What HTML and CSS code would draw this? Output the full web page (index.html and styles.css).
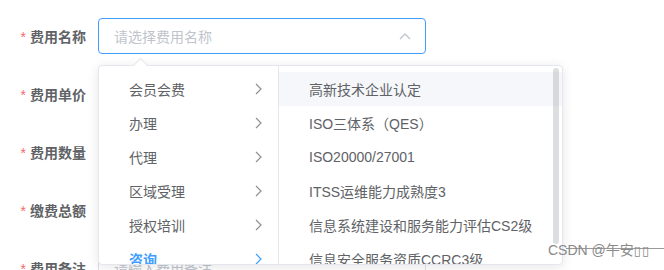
FILE: index.html
```html
<!DOCTYPE html>
<html lang="zh-CN">
<head>
    <meta charset="UTF-8">
    <title>费用表单</title>
    <link rel="stylesheet" href="styles.css">
</head>
<body>
    <div class="form">
        <div class="form-item">
            <label class="label"><span class="req">*</span>费用名称</label>
            <div class="input is-focus">
                <span class="placeholder">请选择费用名称</span>
                <svg class="arrow" width="12" height="8" viewBox="0 0 12 8"><path d="M1 7 L6 2 L11 7" fill="none" stroke="#c0c4cc" stroke-width="1.3"/></svg>
            </div>
        </div>
        <div class="form-item">
            <label class="label"><span class="req">*</span>费用单价</label>
            <div class="input"><span class="placeholder">请输入费用单价</span></div>
        </div>
        <div class="form-item">
            <label class="label"><span class="req">*</span>费用数量</label>
            <div class="input"><span class="placeholder">请输入费用数量</span></div>
        </div>
        <div class="form-item">
            <label class="label"><span class="req">*</span>缴费总额</label>
            <div class="input"><span class="placeholder">请输入缴费总额</span></div>
        </div>
        <div class="form-item">
            <label class="label"><span class="req">*</span>费用备注</label>
            <div class="input"><span class="placeholder">请输入费用备注</span></div>
        </div>
    </div>

    <!-- 级联下拉面板 -->
    <div class="cascader-panel">
        <div class="popper-arrow"></div>
        <div class="menu menu-first">
            <div class="node">会员会费<svg class="chev" width="7" height="12" viewBox="0 0 7 12"><path d="M1 1 L6 6 L1 11" fill="none" stroke="currentColor" stroke-width="1.2"/></svg></div>
            <div class="node">办理<svg class="chev" width="7" height="12" viewBox="0 0 7 12"><path d="M1 1 L6 6 L1 11" fill="none" stroke="currentColor" stroke-width="1.2"/></svg></div>
            <div class="node">代理<svg class="chev" width="7" height="12" viewBox="0 0 7 12"><path d="M1 1 L6 6 L1 11" fill="none" stroke="currentColor" stroke-width="1.2"/></svg></div>
            <div class="node">区域受理<svg class="chev" width="7" height="12" viewBox="0 0 7 12"><path d="M1 1 L6 6 L1 11" fill="none" stroke="currentColor" stroke-width="1.2"/></svg></div>
            <div class="node">授权培训<svg class="chev" width="7" height="12" viewBox="0 0 7 12"><path d="M1 1 L6 6 L1 11" fill="none" stroke="currentColor" stroke-width="1.2"/></svg></div>
            <div class="node active">咨询<svg class="chev" width="7" height="12" viewBox="0 0 7 12"><path d="M1 1 L6 6 L1 11" fill="none" stroke="currentColor" stroke-width="1.2"/></svg></div>
        </div>
        <div class="menu menu-second">
            <div class="node hover">高新技术企业认定</div>
            <div class="node">ISO三体系（QES）</div>
            <div class="node">ISO20000/27001</div>
            <div class="node">ITSS运维能力成熟度3</div>
            <div class="node">信息系统建设和服务能力评估CS2级</div>
            <div class="node">信息安全服务资质CCRC3级</div>
            <div class="scrollbar"></div>
        </div>
    </div>

    <div class="watermark">CSDN @午安<span class="tofu">▯▯</span></div>
</body>
</html>
```

FILE: styles.css
```css
html {
    overflow: hidden;
}
body {
    margin: 0;
    width: 664px;
    height: 270px;
    overflow: hidden;
    background: #fff;
    font-family: 'Liberation Sans', 'Noto Sans CJK SC', sans-serif;
    font-size: 14px;
    color: #606266;
    position: relative;
}
.form {
    padding-top: 18px;
}
.form-item {
    display: flex;
    align-items: center;
    height: 36px;
    margin-bottom: 22px;
}
.label {
    width: 98px;
    box-sizing: border-box;
    padding-right: 12px;
    text-align: right;
    font-weight: bold;
    color: #606266;
}
.req {
    color: #f56c6c;
    margin-right: 4px;
    font-weight: normal;
}
.input {
    width: 328px;
    height: 36px;
    box-sizing: border-box;
    border: 1px solid #dcdfe6;
    border-radius: 4px;
    display: flex;
    align-items: center;
    justify-content: space-between;
    padding: 0 14px 0 15px;
}
.input.is-focus {
    border-color: #409eff;
}
.placeholder {
    color: #c0c4cc;
}
.cascader-panel {
    position: absolute;
    left: 98px;
    top: 65px;
    width: 465px;
    height: 200px;
    box-sizing: border-box;
    border: 1px solid #e4e7ed;
    border-radius: 4px;
    background: #fff;
    box-shadow: 0 2px 12px 0 rgba(0,0,0,0.1);
    display: flex;
}
.popper-arrow {
    position: absolute;
    left: 36px;
    top: -6px;
    width: 10px;
    height: 10px;
    background: #fff;
    border-left: 1px solid #e4e7ed;
    border-top: 1px solid #e4e7ed;
    transform: rotate(45deg);
}
.menu {
    padding-top: 6px;
    overflow: hidden;
    position: relative;
}
.menu-first {
    width: 180px;
    box-sizing: border-box;
    border-right: 1px solid #e4e7ed;
}
.menu-second {
    flex: 1;
}
.node {
    height: 34px;
    display: flex;
    align-items: center;
    justify-content: space-between;
    padding: 0 16px 0 30px;
    color: #606266;
}
.node .chev {
    color: #8e9096;
}
.node.active {
    color: #409eff;
    font-weight: bold;
}
.node.active .chev {
    color: #409eff;
}
.node.hover {
    background: #f5f7fa;
}
.scrollbar {
    position: absolute;
    right: 3px;
    top: 2px;
    width: 6px;
    height: 176px;
    border-radius: 3px;
    background: rgba(144,147,153,0.3);
}
.watermark {
    position: absolute;
    left: 548px;
    top: 239px;
    color: #8a8a8a;
    font-size: 14px;
    white-space: nowrap;
}
.watermark .tofu {
    letter-spacing: 1px;
    font-family: 'DejaVu Sans', sans-serif;
    font-size: 13px;
}
.watermark::after {
    content: "";
    position: absolute;
    left: 18px;
    top: 9px;
    width: 120px;
    height: 1px;
    background: #9a9a9a;
    z-index: -1;
}
```
